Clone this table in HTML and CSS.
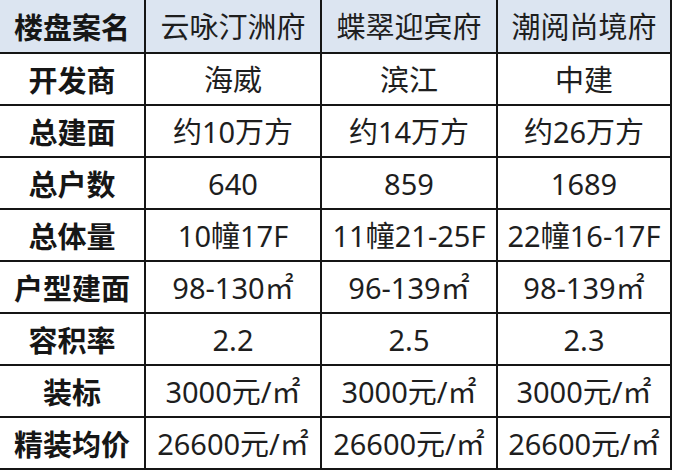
FILE: index.html
```html
<!DOCTYPE html>
<html lang="zh-CN">
<head>
<meta charset="utf-8">
<link rel="stylesheet" href="styles.css">
</head>
<body>
<div class="sheet">
  <div class="cell head key">楼盘案名</div>
  <div class="cell head">云咏汀洲府</div>
  <div class="cell head">蝶翠迎宾府</div>
  <div class="cell head">潮阅尚境府</div>

  <div class="cell key">开发商</div>
  <div class="cell">海威</div>
  <div class="cell">滨江</div>
  <div class="cell">中建</div>

  <div class="cell key">总建面</div>
  <div class="cell">约10万方</div>
  <div class="cell">约14万方</div>
  <div class="cell">约26万方</div>

  <div class="cell key">总户数</div>
  <div class="cell">640</div>
  <div class="cell">859</div>
  <div class="cell">1689</div>

  <div class="cell key">总体量</div>
  <div class="cell">10幢17F</div>
  <div class="cell">11幢21-25F</div>
  <div class="cell">22幢16-17F</div>

  <div class="cell key">户型建面</div>
  <div class="cell">98-130㎡</div>
  <div class="cell">96-139㎡</div>
  <div class="cell">98-139㎡</div>

  <div class="cell key">容积率</div>
  <div class="cell">2.2</div>
  <div class="cell">2.5</div>
  <div class="cell">2.3</div>

  <div class="cell key">装标</div>
  <div class="cell">3000元/㎡</div>
  <div class="cell">3000元/㎡</div>
  <div class="cell">3000元/㎡</div>

  <div class="cell key">精装均价</div>
  <div class="cell">26600元/㎡</div>
  <div class="cell">26600元/㎡</div>
  <div class="cell">26600元/㎡</div>
</div>
</body>
</html>
```
FILE: styles.css
```css
html, body {
  margin: 0;
  padding: 0;
  background: #ffffff;
}

.sheet {
  display: grid;
  grid-template-columns: 144px 174px 174px 172px;
  grid-template-rows: 52px repeat(8, 50px);
  gap: 2px;
  width: fit-content;
  background: #151515;
  border-right: 2px solid #151515;
  border-bottom: 2px solid #151515;
}

.cell {
  display: flex;
  align-items: center;
  justify-content: center;
  background: #ffffff;
  color: #1e1e1e;
  font-family: "Noto Sans", "Noto Sans CJK SC", sans-serif;
  font-size: 29px;
  line-height: 1;
  white-space: nowrap;
}

.head {
  background: #dce5f1;
}

.key {
  font-family: "Noto Sans CJK SC", sans-serif;
  font-weight: 700;
  color: #161616;
}
```
